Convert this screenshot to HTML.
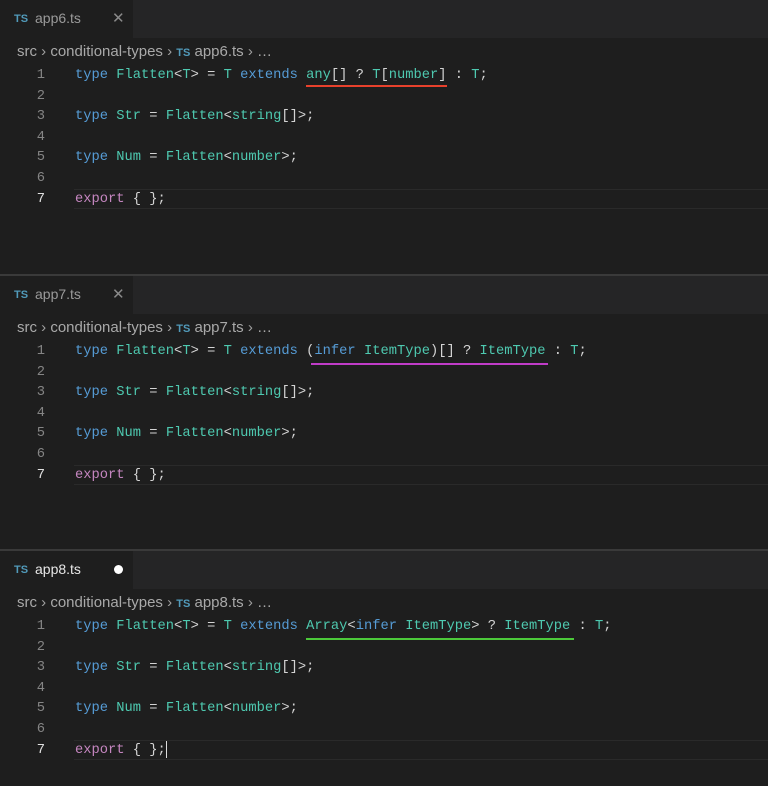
<!DOCTYPE html>
<html><head><style>
body{margin:0;width:768px;height:786px;background:#1e1e1e;position:relative;overflow:hidden;font-family:"Liberation Sans",sans-serif}
.p{position:absolute;left:0;width:768px;background:#1e1e1e}
.tabbar{position:absolute;left:0;top:0;width:768px;height:38px;background:#252526}
.tab{position:absolute;left:0;top:0;width:133px;height:38px;background:#1e1e1e}
.ts{position:absolute;font-weight:bold;color:#519aba;font-size:11px}
.tname{position:absolute;left:35px;top:10px;font-size:14px;color:#9a9a9a}
.x{position:absolute;left:112px;top:9px;font-size:15px;color:#8a8a8a}
.bc{position:absolute;left:17px;top:43px;font-size:15px;color:#a9a9a9;white-space:pre}
.code{position:absolute;left:0;top:66px;font-family:"Liberation Mono",monospace;font-size:13.75px;line-height:20.6px;white-space:pre;color:#d4d4d4}
.ln{position:absolute;left:0;width:45px;text-align:right;color:#858585}
.l{position:absolute;left:75px}
.k{color:#569cd6}.t{color:#4ec9b0}.e{color:#c586c0}
.cur{position:absolute;left:74px;width:694px;height:18px;border-top:1px solid #2a2a2a;border-bottom:1px solid #2a2a2a}
.u{position:absolute;height:2px}
.div{position:absolute;left:0;width:768px;height:2px;background:#3a3a3a}
.c{color:#a0a0a0}
</style></head><body>

<div class="p" style="top:0;height:274px">
 <div class="tabbar"><div class="tab"><span class="ts" style="left:14px;top:13px">TS</span><span class="tname">app6.ts</span><span class="x">✕</span></div></div>
 <div class="bc">src <span class="c">›</span> conditional-types <span class="c">›</span> <span style="color:#519aba;font-weight:bold;font-size:11px">TS</span> app6.ts <span class="c">›</span> …</div>
 <div class="cur" style="top:189px"></div>
 <div class="code" style="width:768px">
  <div class="ln" style="top:0">1</div><div class="ln" style="top:20.6px">2</div><div class="ln" style="top:41.2px">3</div><div class="ln" style="top:61.8px">4</div><div class="ln" style="top:82.4px">5</div><div class="ln" style="top:103px">6</div><div class="ln" style="top:123.6px;color:#e0e0e0">7</div>
  <div class="l" style="top:0"><span class="k">type</span> <span class="t">Flatten</span>&lt;<span class="t">T</span>&gt; = <span class="t">T</span> <span class="k">extends</span> <span class="t">any</span>[] ? <span class="t">T</span>[<span class="t">number</span>] : <span class="t">T</span>;</div>
  <div class="l" style="top:41.2px"><span class="k">type</span> <span class="t">Str</span> = <span class="t">Flatten</span>&lt;<span class="t">string</span>[]&gt;;</div>
  <div class="l" style="top:82.4px"><span class="k">type</span> <span class="t">Num</span> = <span class="t">Flatten</span>&lt;<span class="t">number</span>&gt;;</div>
  <div class="l" style="top:123.6px"><span class="e">export</span> { };</div>
 </div>
 <div class="u" style="left:306px;width:141px;top:85px;background:#e8412c"></div>
</div>
<div class="div" style="top:274px"></div>

<div class="p" style="top:276px;height:273px">
 <div class="tabbar"><div class="tab"><span class="ts" style="left:14px;top:13px">TS</span><span class="tname">app7.ts</span><span class="x">✕</span></div></div>
 <div class="bc">src <span class="c">›</span> conditional-types <span class="c">›</span> <span style="color:#519aba;font-weight:bold;font-size:11px">TS</span> app7.ts <span class="c">›</span> …</div>
 <div class="cur" style="top:189px"></div>
 <div class="code" style="width:768px">
  <div class="ln" style="top:0">1</div><div class="ln" style="top:20.6px">2</div><div class="ln" style="top:41.2px">3</div><div class="ln" style="top:61.8px">4</div><div class="ln" style="top:82.4px">5</div><div class="ln" style="top:103px">6</div><div class="ln" style="top:123.6px;color:#e0e0e0">7</div>
  <div class="l" style="top:0"><span class="k">type</span> <span class="t">Flatten</span>&lt;<span class="t">T</span>&gt; = <span class="t">T</span> <span class="k">extends</span> (<span class="k">infer</span> <span class="t">ItemType</span>)[] ? <span class="t">ItemType</span> : <span class="t">T</span>;</div>
  <div class="l" style="top:41.2px"><span class="k">type</span> <span class="t">Str</span> = <span class="t">Flatten</span>&lt;<span class="t">string</span>[]&gt;;</div>
  <div class="l" style="top:82.4px"><span class="k">type</span> <span class="t">Num</span> = <span class="t">Flatten</span>&lt;<span class="t">number</span>&gt;;</div>
  <div class="l" style="top:123.6px"><span class="e">export</span> { };</div>
 </div>
 <div class="u" style="left:311px;width:237px;top:87px;background:#c03cc8"></div>
</div>
<div class="div" style="top:549px"></div>

<div class="p" style="top:551px;height:235px">
 <div class="tabbar"><div class="tab"><span class="ts" style="left:14px;top:13px">TS</span><span class="tname" style="color:#e8e8e8">app8.ts</span><span style="position:absolute;left:114px;top:14px;width:9px;height:9px;border-radius:50%;background:#fff"></span></div></div>
 <div class="bc">src <span class="c">›</span> conditional-types <span class="c">›</span> <span style="color:#519aba;font-weight:bold;font-size:11px">TS</span> app8.ts <span class="c">›</span> …</div>
 <div class="cur" style="top:189px"></div>
 <div class="code" style="width:768px">
  <div class="ln" style="top:0">1</div><div class="ln" style="top:20.6px">2</div><div class="ln" style="top:41.2px">3</div><div class="ln" style="top:61.8px">4</div><div class="ln" style="top:82.4px">5</div><div class="ln" style="top:103px">6</div><div class="ln" style="top:123.6px;color:#e0e0e0">7</div>
  <div class="l" style="top:0"><span class="k">type</span> <span class="t">Flatten</span>&lt;<span class="t">T</span>&gt; = <span class="t">T</span> <span class="k">extends</span> <span class="t">Array</span>&lt;<span class="k">infer</span> <span class="t">ItemType</span>&gt; ? <span class="t">ItemType</span> : <span class="t">T</span>;</div>
  <div class="l" style="top:41.2px"><span class="k">type</span> <span class="t">Str</span> = <span class="t">Flatten</span>&lt;<span class="t">string</span>[]&gt;;</div>
  <div class="l" style="top:82.4px"><span class="k">type</span> <span class="t">Num</span> = <span class="t">Flatten</span>&lt;<span class="t">number</span>&gt;;</div>
  <div class="l" style="top:123.6px"><span class="e">export</span> { };<span style="display:inline-block;width:1px;height:17px;background:#ddd;vertical-align:middle"></span></div>
 </div>
 <div class="u" style="left:306px;width:268px;top:87px;background:#4cc93a"></div>
</div>
</body></html>
